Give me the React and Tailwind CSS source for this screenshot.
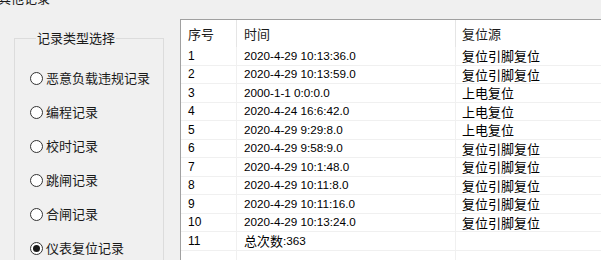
import React from "react";

const recordTypes = [
  { label: "恶意负载违规记录", checked: false },
  { label: "编程记录", checked: false },
  { label: "校时记录", checked: false },
  { label: "跳闸记录", checked: false },
  { label: "合闸记录", checked: false },
  { label: "仪表复位记录", checked: true },
];

const rows = [
  ["1", "2020-4-29 10:13:36.0", "复位引脚复位"],
  ["2", "2020-4-29 10:13:59.0", "复位引脚复位"],
  ["3", "2000-1-1 0:0:0.0", "上电复位"],
  ["4", "2020-4-24 16:6:42.0", "上电复位"],
  ["5", "2020-4-29 9:29:8.0", "上电复位"],
  ["6", "2020-4-29 9:58:9.0", "复位引脚复位"],
  ["7", "2020-4-29 10:1:48.0", "复位引脚复位"],
  ["8", "2020-4-29 10:11:8.0", "复位引脚复位"],
  ["9", "2020-4-29 10:11:16.0", "复位引脚复位"],
  ["10", "2020-4-29 10:13:24.0", "复位引脚复位"],
  ["11", "total", ""],
  ["", "", ""],
];

const cjk = { fontFamily: '"Noto Sans CJK SC", "Liberation Sans", sans-serif' };
const latin = { fontFamily: '"Liberation Sans", "Noto Sans CJK SC", sans-serif' };

function Radio({ label, checked }) {
  return (
    <div className="flex items-center h-[34px] gap-[3px]">
      <span className="w-[13px] h-[13px] rounded-full border border-[#333333] bg-white flex items-center justify-center shrink-0">
        {checked && <span className="w-[7px] h-[7px] rounded-full bg-[#1a1a1a]"></span>}
      </span>
      <span className="text-[13px] leading-[16px] text-[#1a1a1a] whitespace-nowrap" style={cjk}>
        {label}
      </span>
    </div>
  );
}

export default function App() {
  return (
    <div className="w-[601px] h-[260px] bg-[#f0f0f0] overflow-hidden flex flex-col">
      {/* clipped label of the outer group */}
      <div className="h-[5px] overflow-hidden shrink-0">
        <div className="text-[13px] leading-[16px] -mt-[10px] -ml-[2px] text-[#1a1a1a] whitespace-nowrap" style={cjk}>
          其他记录
        </div>
      </div>

      <div className="flex flex-1 min-h-0 pt-[14px]">
        {/* record type group */}
        <div className="pl-[14px] pt-[11px] w-[180px] shrink-0">
          <fieldset className="border border-[#dcdcdc] w-[150px] h-[260px] pl-[15px] pt-[15px]">
            <legend className="ml-[6px] px-[1px] text-[13px] leading-[16px] text-[#1a1a1a]" style={cjk}>
              记录类型选择
            </legend>
            {recordTypes.map((r) => (
              <Radio key={r.label} label={r.label} checked={r.checked} />
            ))}
          </fieldset>
        </div>

        {/* list */}
        <div className="flex-1 bg-white border-t border-l border-[#a0a0a0] min-w-0">
          <div className="flex h-[27px] items-center text-[13px] text-[#1a1a1a]" style={cjk}>
            <div className="w-[56px] h-full pl-[7px] flex items-center border-r border-[#e5e5e5] shrink-0">序号</div>
            <div className="w-[219px] h-full pl-[7px] flex items-center border-r border-[#e5e5e5] shrink-0">时间</div>
            <div className="flex-1 pl-[6px] flex items-center">复位源</div>
          </div>
          {rows.map((r, i) => (
            <div key={i} className="flex h-[18.5px] items-center border-b border-[#f0f0f0] text-black">
              <div className="w-[56px] h-full pl-[7px] flex items-center border-r border-[#f0f0f0] shrink-0 text-[12px]" style={latin}>
                {r[0]}
              </div>
              <div className="w-[219px] h-full pl-[7px] flex items-center border-r border-[#f0f0f0] shrink-0 text-[11.7px] whitespace-nowrap" style={latin}>
                {r[1] === "total" ? (
                  <>
                    <span className="text-[13px]" style={cjk}>总次数</span>
                    <span>:363</span>
                  </>
                ) : (
                  r[1]
                )}
              </div>
              <div className="flex-1 h-full pl-[6px] flex items-center text-[13px] whitespace-nowrap" style={cjk}>
                {r[2]}
              </div>
            </div>
          ))}
        </div>
      </div>
    </div>
  );
}
